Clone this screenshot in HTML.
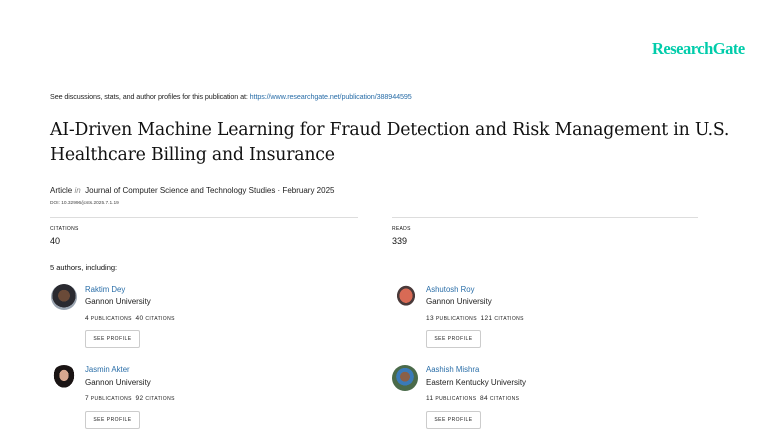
<!DOCTYPE html><html><head><style>
body{margin:0;width:784px;height:441px;background:#fff;position:relative;overflow:hidden;font-family:"Liberation Sans",sans-serif;color:#111}
.a{position:absolute;white-space:nowrap}
.s{font-size:6px;letter-spacing:.3px}
.nm{font-size:7.8px;color:#2a6ea8}
.un{font-size:8px;color:#222}
.st{font-size:5px;letter-spacing:.4px;color:#222}
.st b{font-size:6.5px;font-weight:normal}
.btn{position:absolute;width:53px;height:16px;border:1px solid #ccc;border-radius:2px;font-size:5px;letter-spacing:.5px;text-align:center;line-height:16px;color:#222}
.av{position:absolute;width:26px;height:26px;border-radius:50%;overflow:hidden}
.hr{position:absolute;height:1px;background:#ddd;top:217px}
</style></head><body>
<div class="a" style="left:652px;top:39px;font-family:'Liberation Serif',serif;font-weight:bold;font-size:16.5px;color:#00ccaa;letter-spacing:-.5px">ResearchGate</div>
<div class="a" style="left:50px;top:92px;font-size:7.2px;color:#222;letter-spacing:-.1px">See discussions, stats, and author profiles for this publication at: <span style="color:#2a6ea8">https://www.researchgate.net/publication/388944595</span></div>
<div class="a" style="left:50px;top:118px;font-family:'DejaVu Serif','Liberation Serif',serif;font-size:17.3px;line-height:25px;color:#111;letter-spacing:-.2px">AI-Driven Machine Learning for Fraud Detection and Risk Management in U.S.<br>Healthcare Billing and Insurance</div>
<div class="a" style="left:50px;top:186px;font-size:8px;color:#222">Article <span style="color:#888;font-style:italic">in</span>&nbsp; Journal of Computer Science and Technology Studies · February 2025</div>
<div class="a" style="left:50px;top:201px;font-size:4.8px;color:#444">DOI: 10.32996/jcsts.2025.7.1.19</div>
<div class="hr" style="left:50px;width:308px"></div>
<div class="hr" style="left:392px;width:306px"></div>
<div class="a s" style="left:50px;top:226px;font-size:5px">CITATIONS</div>
<div class="a" style="left:50px;top:236px;font-size:9px">40</div>
<div class="a s" style="left:392px;top:226px;font-size:5px">READS</div>
<div class="a" style="left:392px;top:236px;font-size:9px">339</div>
<div class="a" style="left:50px;top:263px;font-size:7.5px">5 authors, including:</div>

<div class="av" style="left:51px;top:284px;background:radial-gradient(circle at 50% 45%,#6a4a38 0 30%,#2a2a30 31% 60%,#9aa4b0 61%)"></div>
<div class="a nm" style="left:85px;top:285px">Raktim Dey</div>
<div class="a un" style="left:85px;top:297px">Gannon University</div>
<div class="a st" style="left:85px;top:315px"><b>4</b> PUBLICATIONS &nbsp;<b>40</b> CITATIONS</div>
<div class="btn" style="left:85px;top:330px">SEE PROFILE</div>

<div class="av" style="left:51px;top:365px;background:radial-gradient(ellipse at 50% 40%,#d8a890 0 25%,#1a1414 26% 55%,#fff 56%)"></div>
<div class="a nm" style="left:85px;top:365px">Jasmin Akter</div>
<div class="a un" style="left:85px;top:378px">Gannon University</div>
<div class="a st" style="left:85px;top:395px"><b>7</b> PUBLICATIONS &nbsp;<b>92</b> CITATIONS</div>
<div class="btn" style="left:85px;top:411px">SEE PROFILE</div>

<div class="av" style="left:393px;top:284px;background:radial-gradient(ellipse at 50% 45%,#d86a55 0 35%,#4a3a3a 36% 48%,#fff 50%)"></div>
<div class="a nm" style="left:426px;top:285px">Ashutosh Roy</div>
<div class="a un" style="left:426px;top:297px">Gannon University</div>
<div class="a st" style="left:426px;top:315px"><b>13</b> PUBLICATIONS &nbsp;<b>121</b> CITATIONS</div>
<div class="btn" style="left:426px;top:330px">SEE PROFILE</div>

<div class="av" style="left:392px;top:365px;background:radial-gradient(circle at 50% 45%,#8a6048 0 25%,#3a7ab8 26% 45%,#4a6a4a 46%)"></div>
<div class="a nm" style="left:426px;top:365px">Aashish Mishra</div>
<div class="a un" style="left:426px;top:378px">Eastern Kentucky University</div>
<div class="a st" style="left:426px;top:395px"><b>11</b> PUBLICATIONS &nbsp;<b>84</b> CITATIONS</div>
<div class="btn" style="left:426px;top:411px">SEE PROFILE</div>
</body></html>
